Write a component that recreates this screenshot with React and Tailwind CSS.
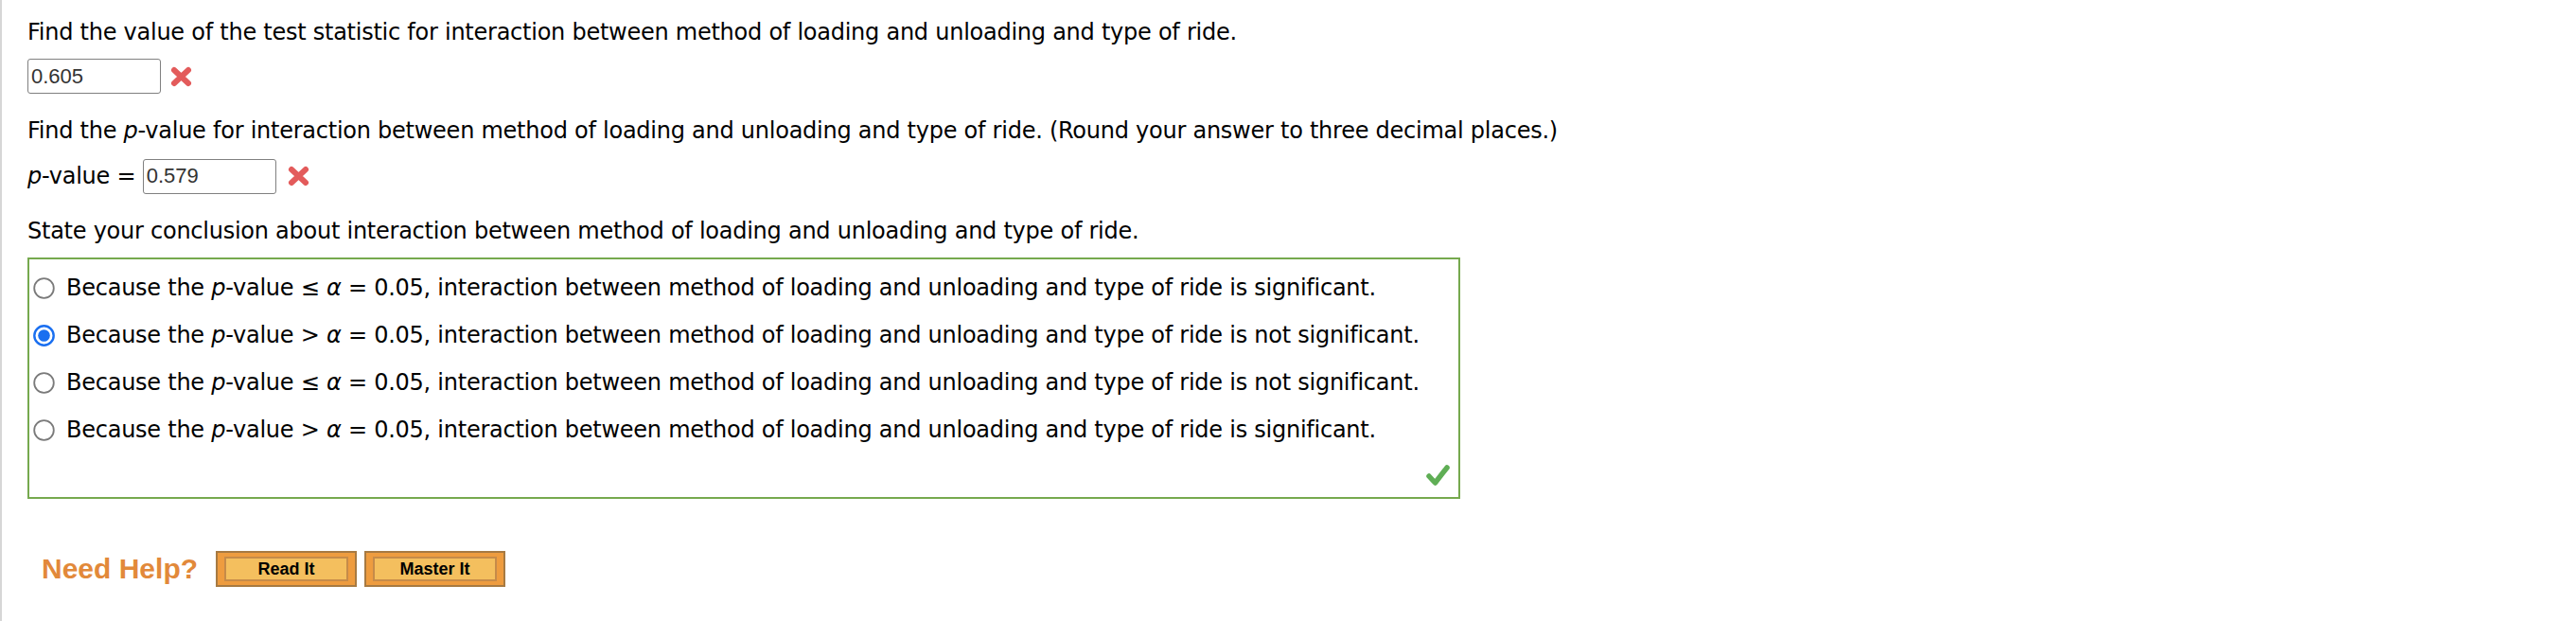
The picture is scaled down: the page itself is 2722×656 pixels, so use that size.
import React from "react";

const font = { fontFamily: '"DejaVu Sans", Verdana, sans-serif' };

const options = [
  { op: "≤", result: "is significant.", checked: false },
  { op: ">", result: "is not significant.", checked: true },
  { op: "≤", result: "is not significant.", checked: false },
  { op: ">", result: "is significant.", checked: false },
];

/* red cross shown beside a wrong answer */
const WrongMark = () => (
  <svg width="25" height="24" viewBox="0 0 25 24" className="shrink-0">
    <path d="M5 5 L20 19 M20 5 L5 19" stroke="#e35b5b" strokeWidth="6" strokeLinecap="round" fill="none" />
  </svg>
);

const RightMark = () => (
  <svg width="27" height="24" viewBox="0 0 27 24">
    <path d="M4 13 L10.5 20 L23 4" stroke="#5fae55" strokeWidth="5.5" strokeLinecap="round" strokeLinejoin="round" fill="none" />
  </svg>
);

const Radio = ({ checked }) => (
  <svg width="23" height="23" viewBox="0 0 23 23" className="shrink-0">
    {checked ? (
      <>
        <circle cx="11.5" cy="11.5" r="10.2" fill="#fff" stroke="#1a6ff0" strokeWidth="2.4" />
        <circle cx="11.5" cy="11.5" r="6.3" fill="#1a6ff0" />
      </>
    ) : (
      <circle cx="11.5" cy="11.5" r="10.3" fill="#fff" stroke="#7a7a7a" strokeWidth="1.8" />
    )}
  </svg>
);

const AnswerBox = ({ value }) => (
  <div
    className="w-[141px] h-[37px] border border-[#808080] rounded-[3px] flex items-center pl-[3px] text-[22px] tracking-normal text-[#333]"
    style={{ fontFamily: '"Liberation Sans", Arial, sans-serif' }}
  >
    {value}
  </div>
);

const HelpButton = ({ label }) => (
  <button
    type="button"
    className="w-[149px] h-[38px] border-2 border-[#a77a42] bg-[#ee9c3f] px-[7px] py-[4px] flex"
  >
    <span
      className="flex-1 flex items-center justify-center border-2 border-[#c68b49] bg-[#f4bf5e] text-[18px] font-bold text-black tracking-normal"
      style={{ fontFamily: '"Liberation Sans", Arial, sans-serif' }}
    >
      {label}
    </span>
  </button>
);

export default function App() {
  return (
    <div className="min-h-[656px] bg-white border-l-2 border-[#d6d6d6] text-black" style={font}>
      <div className="pl-[27px] pt-[19px] text-[24px] leading-[30px] tracking-[-0.25px] whitespace-nowrap">
        <p>Find the value of the test statistic for interaction between method of loading and unloading and type of ride.</p>

        <div className="flex items-center gap-[9px] mt-[13px]">
          <AnswerBox value="0.605" />
          <WrongMark />
        </div>

        <p className="mt-[24px]">
          Find the <i>p</i>-value for interaction between method of loading and unloading and type of ride. (Round your
          answer to three decimal places.)
        </p>

        <div className="flex items-center mt-[15px] h-[36px]">
          <span>
            <i>p</i>-value =&nbsp;
          </span>
          <AnswerBox value="0.579" />
          <span className="ml-[11px]">
            <WrongMark />
          </span>
        </div>

        <p className="mt-[25px]">State your conclusion about interaction between method of loading and unloading and type of ride.</p>

        <div className="mt-[13px] w-[1514px] border-2 border-[#76a94e] pt-[5px]">
          {options.map((o, i) => (
            <label key={i} className="flex items-center h-[50px] pl-[4px] gap-[12px]">
              <Radio checked={o.checked} />
              <span>
                Because the <i>p</i>-value {o.op} <i>α</i> = 0.05, interaction between method of loading and unloading
                and type of ride {o.result}
              </span>
            </label>
          ))}
          <div className="flex justify-end pr-[8px] mt-[11px] mb-[11px]">
            <RightMark />
          </div>
        </div>

        <div className="flex items-center mt-[55px]">
          <span
            className="ml-[15px] mr-[19px] text-[30px] font-bold text-[#e2893a] tracking-normal"
            style={{ fontFamily: '"Liberation Sans", Arial, sans-serif' }}
          >
            Need Help?
          </span>
          <div className="flex gap-[8px]">
            <HelpButton label="Read It" />
            <HelpButton label="Master It" />
          </div>
        </div>
      </div>
    </div>
  );
}
